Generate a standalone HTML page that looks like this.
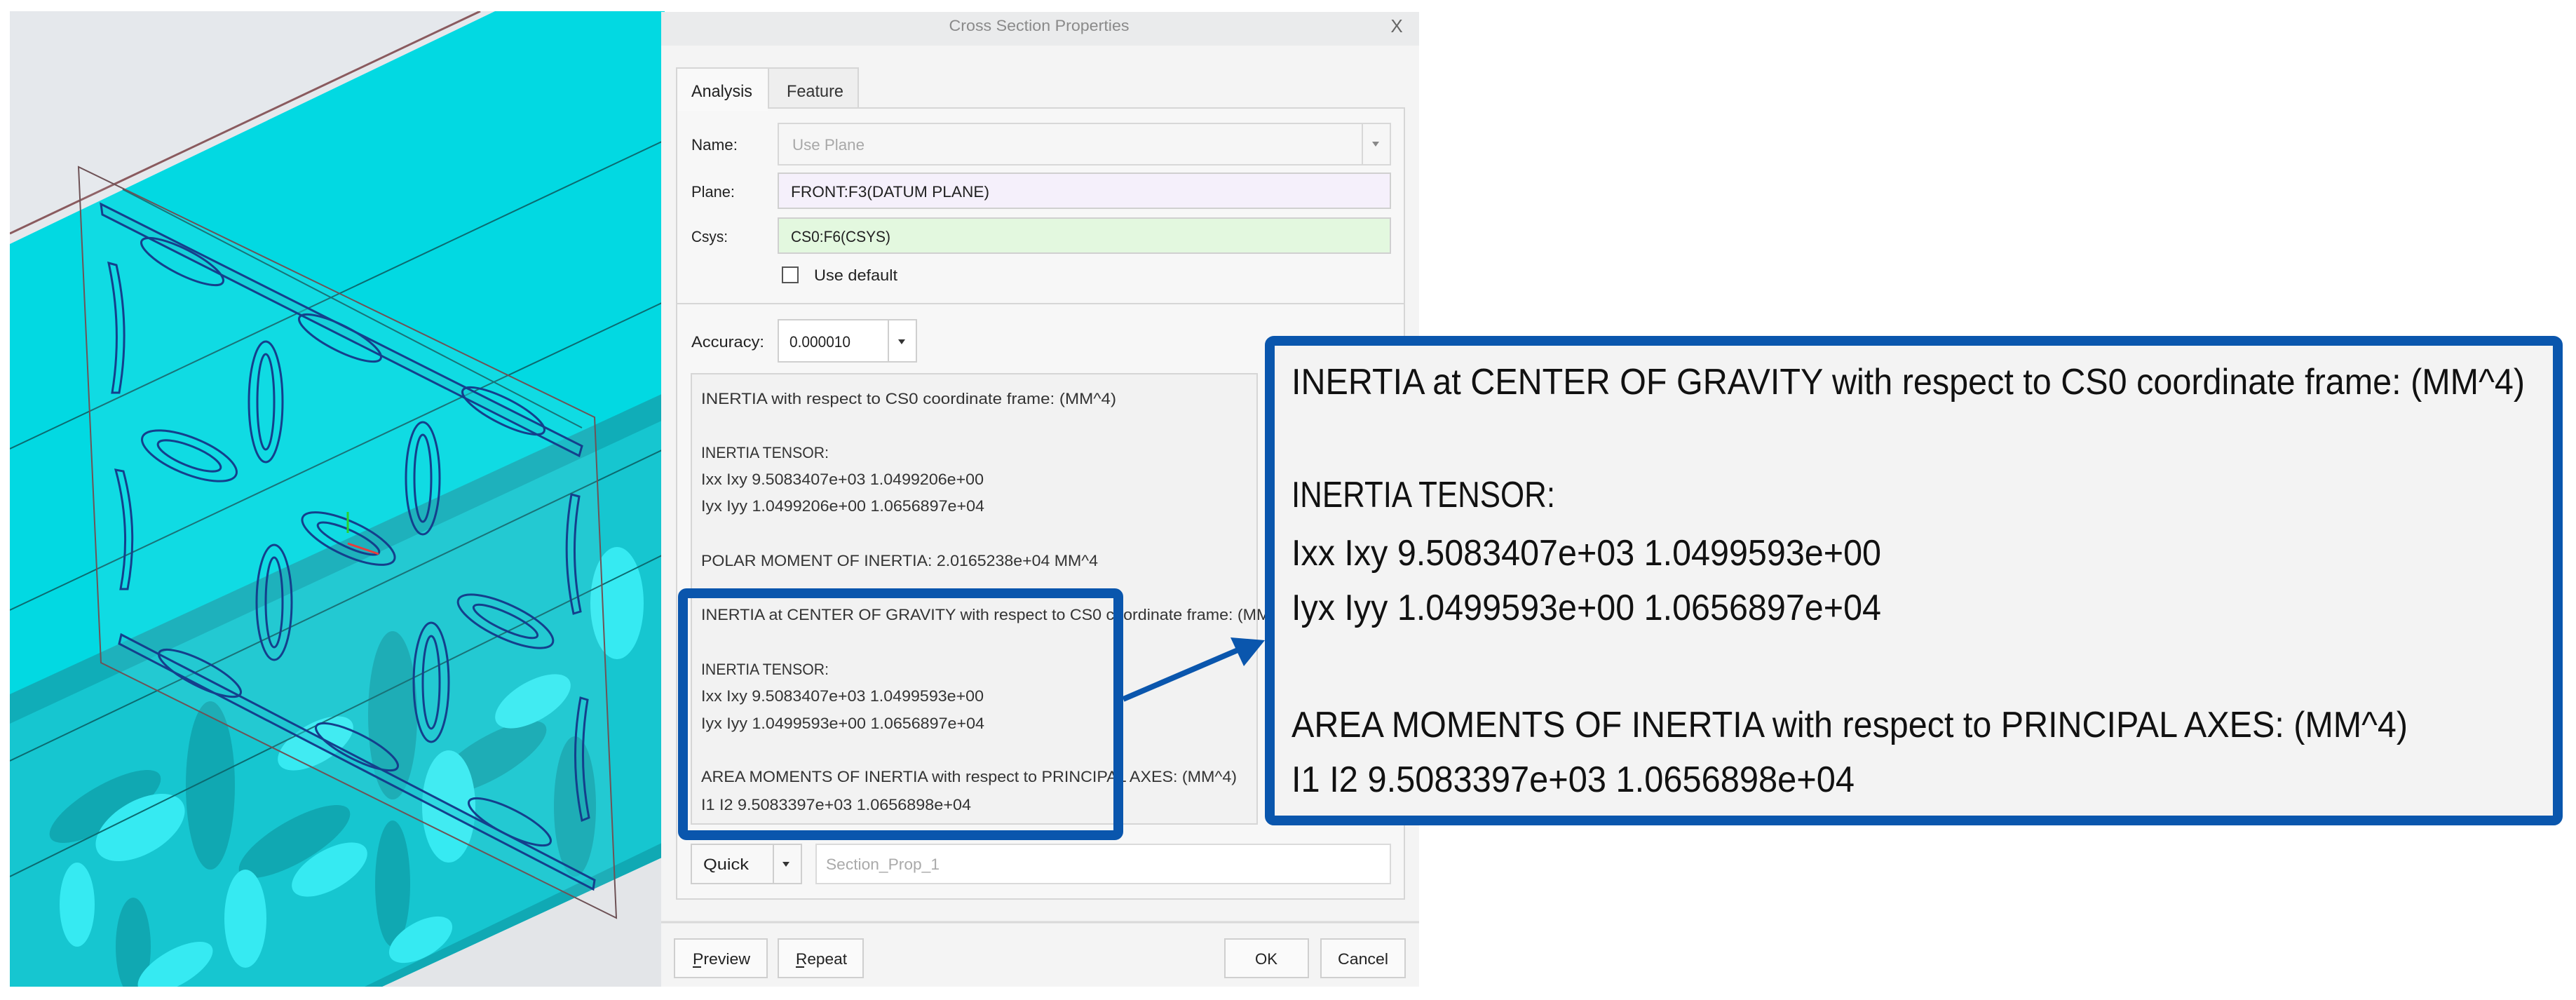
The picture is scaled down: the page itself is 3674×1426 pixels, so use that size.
<!DOCTYPE html>
<html><head><meta charset="utf-8"><style>html,body{margin:0;padding:0;background:#fff}svg{display:block}text{font-family:"Liberation Sans",sans-serif}</style></head>
<body>
<svg width="3674" height="1426" viewBox="0 0 3674 1426" xmlns="http://www.w3.org/2000/svg" xml:space="preserve">
<rect width="3674" height="1426" fill="#fff"/>
<defs><clipPath id="v"><rect x="14" y="16" width="934" height="1391"/></clipPath></defs>
<g clip-path="url(#v)">
<rect x="14" y="16" width="934" height="1391" fill="#02d9e2"/>
<polygon points="14,16 706,16 14,348" fill="#e5e8ec"/>
<line x1="14" y1="333" x2="685" y2="16" stroke="#8a5a5e" stroke-width="3"/>
<polygon points="14,1030 948,595 948,1407 14,1407" fill="#16c6d0"/>
<g fill="#0f9ea8" opacity="0.75">
<ellipse cx="300" cy="1120" rx="35" ry="120"/>
<ellipse cx="560" cy="1020" rx="35" ry="120"/>
<ellipse cx="190" cy="1350" rx="25" ry="70"/>
<ellipse cx="560" cy="1260" rx="25" ry="90"/>
<ellipse cx="820" cy="1150" rx="30" ry="100"/>
<ellipse cx="420" cy="1200" rx="90" ry="30" transform="rotate(-30 420 1200)"/>
<ellipse cx="700" cy="1080" rx="90" ry="30" transform="rotate(-30 700 1080)"/>
<ellipse cx="150" cy="1150" rx="90" ry="30" transform="rotate(-30 150 1150)"/>
<ellipse cx="760" cy="1330" rx="70" ry="25" transform="rotate(-30 760 1330)"/>
</g>
<g fill="#36eaf2">
<ellipse cx="200" cy="1180" rx="70" ry="38" transform="rotate(-30 200 1180)"/>
<ellipse cx="450" cy="1060" rx="60" ry="28" transform="rotate(-30 450 1060)"/>
<ellipse cx="110" cy="1290" rx="25" ry="60"/>
<ellipse cx="350" cy="1310" rx="30" ry="70"/>
<ellipse cx="470" cy="1240" rx="60" ry="28" transform="rotate(-30 470 1240)"/>
<ellipse cx="640" cy="1150" rx="38" ry="80"/>
<ellipse cx="760" cy="1000" rx="60" ry="28" transform="rotate(-30 760 1000)"/>
<ellipse cx="250" cy="1380" rx="60" ry="25" transform="rotate(-30 250 1380)"/>
<ellipse cx="880" cy="860" rx="38" ry="80"/>
<ellipse cx="600" cy="1340" rx="50" ry="25" transform="rotate(-30 600 1340)"/>
</g>
<polygon points="14,990 948,560 948,598 14,1032" fill="#10adb8"/>
<polygon points="545,1407 948,1221 948,1407" fill="#e3e5e8"/>
<polygon points="520,1407 948,1200 948,1221 545,1407" fill="#10a9b4"/>
<g stroke="#0b6a70" stroke-width="2" fill="none">
<line x1="14" y1="640" x2="948" y2="200"/>
<line x1="14" y1="870" x2="948" y2="430"/>
<line x1="14" y1="1250" x2="948" y2="790"/>
<line x1="14" y1="1085" x2="948" y2="640"/>
<line x1="175" y1="270" x2="830" y2="610"/>
</g>
<polygon points="112,238 848,595 879,1309 144,945" fill="#ffffff" fill-opacity="0.06" stroke="#6e5256" stroke-width="2"/>
<g stroke="#143f8c" stroke-width="3" fill="#1bc6d0" fill-opacity="0.5">
<polygon points="144,291 830,636 826,650 146,306"/>
<polygon points="173,905 848,1255 846,1268 170,918"/>
</g>
<g stroke="#143f8c" stroke-width="3" fill="none">
<ellipse cx="260" cy="373" rx="65" ry="18" transform="rotate(27 260 373)"/>
<ellipse cx="485" cy="482" rx="65" ry="18" transform="rotate(27 485 482)"/>
<ellipse cx="718" cy="586" rx="65" ry="18" transform="rotate(27 718 586)"/>
<ellipse cx="285" cy="960" rx="65" ry="18" transform="rotate(27 285 960)"/>
<ellipse cx="509" cy="1065" rx="65" ry="18" transform="rotate(27 509 1065)"/>
<ellipse cx="727" cy="1172" rx="65" ry="18" transform="rotate(27 727 1172)"/>
<ellipse cx="379" cy="573" rx="24" ry="86"/><ellipse cx="379" cy="573" rx="12" ry="68"/>
<ellipse cx="603" cy="682" rx="24" ry="80"/><ellipse cx="603" cy="682" rx="12" ry="62"/>
<ellipse cx="391" cy="859" rx="25" ry="82"/><ellipse cx="391" cy="859" rx="12" ry="64"/>
<ellipse cx="615" cy="973" rx="25" ry="85"/><ellipse cx="615" cy="973" rx="12" ry="66"/>
<ellipse cx="270" cy="650" rx="72" ry="26" transform="rotate(22 270 650)"/><ellipse cx="270" cy="650" rx="48" ry="14" transform="rotate(22 270 650)"/>
<ellipse cx="497" cy="768" rx="72" ry="24" transform="rotate(25 497 768)"/><ellipse cx="497" cy="768" rx="48" ry="12" transform="rotate(25 497 768)"/>
<ellipse cx="721" cy="886" rx="74" ry="24" transform="rotate(25 721 886)"/><ellipse cx="721" cy="886" rx="50" ry="12" transform="rotate(25 721 886)"/>
<path d="M155,375 Q175,468 160,560 L170,560 Q186,468 166,378 Z"/>
<path d="M165,670 Q188,755 172,840 L182,840 Q198,755 176,672 Z"/>
<path d="M815,705 Q800,791 818,875 L828,872 Q812,791 826,708 Z"/>
<path d="M828,995 Q812,1082 830,1170 L840,1166 Q824,1082 838,998 Z"/>
</g>
<line x1="496" y1="760" x2="496" y2="730" stroke="#2bd12b" stroke-width="3"/>
<line x1="496" y1="775" x2="540" y2="790" stroke="#e83c3c" stroke-width="3"/>
</g>

<rect x="943" y="17" width="1081" height="1390" fill="#f4f4f4"/>
<rect x="943" y="17" width="1081" height="48" fill="#eaebec"/>
<text x="1482" y="44" font-size="22" fill="#8a8a8a" text-anchor="middle" textLength="257" lengthAdjust="spacingAndGlyphs">Cross Section Properties</text>
<text x="1992" y="46" font-size="26" fill="#666" text-anchor="middle">X</text>
<rect x="965" y="97" width="131" height="58" fill="#f9f9f9" stroke="#d6d6d6" stroke-width="2"/>
<rect x="1096" y="97" width="128" height="57" fill="#eeeeee" stroke="#d6d6d6" stroke-width="2"/>
<rect x="965" y="154" width="1038" height="1128" fill="#f7f7f7" stroke="#d6d6d6" stroke-width="2"/>
<rect x="966" y="150" width="129" height="8" fill="#f9f9f9"/>
<text x="986" y="138" font-size="24" fill="#222" textLength="87" lengthAdjust="spacingAndGlyphs">Analysis</text>
<text x="1122" y="138" font-size="24" fill="#333" textLength="81" lengthAdjust="spacingAndGlyphs">Feature</text>
<g font-size="22">
<text x="986" y="214" fill="#222" textLength="66" lengthAdjust="spacingAndGlyphs">Name:</text>
<rect x="1110" y="176" width="873" height="59" fill="#f6f6f6" stroke="#d8d8d8" stroke-width="2"/>
<line x1="1943" y1="177" x2="1943" y2="234" stroke="#d8d8d8" stroke-width="2"/>
<polygon points="1957,202 1967,202 1962,209" fill="#888"/>
<text x="1130" y="214" fill="#a8a8a8" textLength="103" lengthAdjust="spacingAndGlyphs">Use Plane</text>
<text x="986" y="281" fill="#222" textLength="62" lengthAdjust="spacingAndGlyphs">Plane:</text>
<rect x="1110" y="247" width="873" height="50" fill="#f5f0fb" stroke="#d0d0d0" stroke-width="2"/>
<text x="1128" y="281" fill="#222" textLength="283" lengthAdjust="spacingAndGlyphs">FRONT:F3(DATUM PLANE)</text>
<text x="986" y="345" fill="#222" textLength="52" lengthAdjust="spacingAndGlyphs">Csys:</text>
<rect x="1110" y="311" width="873" height="50" fill="#e3f8df" stroke="#d0d0d0" stroke-width="2"/>
<text x="1128" y="345" fill="#222" textLength="142" lengthAdjust="spacingAndGlyphs">CS0:F6(CSYS)</text>
<rect x="1116" y="381" width="22" height="22" fill="#fff" stroke="#555" stroke-width="2"/>
<text x="1161" y="400" fill="#222" textLength="119" lengthAdjust="spacingAndGlyphs">Use default</text>
</g>
<line x1="966" y1="433" x2="2003" y2="433" stroke="#d6d6d6" stroke-width="2"/>
<text x="986" y="495" font-size="22" fill="#222" textLength="104" lengthAdjust="spacingAndGlyphs">Accuracy:</text>
<rect x="1110" y="456" width="197" height="60" fill="#fff" stroke="#cfcfcf" stroke-width="2"/>
<line x1="1267" y1="457" x2="1267" y2="515" stroke="#cfcfcf" stroke-width="2"/>
<polygon points="1281,484 1291,484 1286,491" fill="#333"/>
<text x="1126" y="495" font-size="22" fill="#222" textLength="87" lengthAdjust="spacingAndGlyphs">0.000010</text>
<rect x="986" y="533" width="807" height="642" fill="#f2f2f2" stroke="#d6d6d6" stroke-width="2"/>
<g font-size="22" fill="#333">
<text x="1000" y="576" textLength="592" lengthAdjust="spacingAndGlyphs">INERTIA with respect to CS0 coordinate frame:  (MM^4)</text>
<text x="1000" y="653" textLength="182" lengthAdjust="spacingAndGlyphs">INERTIA TENSOR:</text>
<text x="1000" y="691" textLength="403" lengthAdjust="spacingAndGlyphs">Ixx Ixy  9.5083407e+03  1.0499206e+00</text>
<text x="1000" y="729" textLength="404" lengthAdjust="spacingAndGlyphs">Iyx Iyy  1.0499206e+00  1.0656897e+04</text>
<text x="1000" y="807" textLength="566" lengthAdjust="spacingAndGlyphs">POLAR MOMENT OF INERTIA:  2.0165238e+04 MM^4</text>
<text x="1000" y="884" textLength="843" lengthAdjust="spacingAndGlyphs">INERTIA at CENTER OF GRAVITY with respect to CS0 coordinate frame:  (MM^4)</text>
<text x="1000" y="962" textLength="182" lengthAdjust="spacingAndGlyphs">INERTIA TENSOR:</text>
<text x="1000" y="1000" textLength="403" lengthAdjust="spacingAndGlyphs">Ixx Ixy  9.5083407e+03  1.0499593e+00</text>
<text x="1000" y="1039" textLength="404" lengthAdjust="spacingAndGlyphs">Iyx Iyy  1.0499593e+00  1.0656897e+04</text>
<text x="1000" y="1115" textLength="764" lengthAdjust="spacingAndGlyphs">AREA MOMENTS OF INERTIA with respect to PRINCIPAL AXES:  (MM^4)</text>
<text x="1000" y="1155" textLength="385" lengthAdjust="spacingAndGlyphs">I1  I2  9.5083397e+03  1.0656898e+04</text>
</g>
<rect x="986" y="1204" width="157" height="56" fill="#f8f8f8" stroke="#cfcfcf" stroke-width="2"/>
<line x1="1103" y1="1205" x2="1103" y2="1259" stroke="#cfcfcf" stroke-width="2"/>
<polygon points="1116,1229 1126,1229 1121,1236" fill="#333"/>
<text x="1003" y="1240" font-size="22" fill="#222" textLength="65" lengthAdjust="spacingAndGlyphs">Quick</text>
<rect x="1164" y="1204" width="819" height="56" fill="#fff" stroke="#dadada" stroke-width="2"/>
<text x="1178" y="1240" font-size="22" fill="#aaa" textLength="162" lengthAdjust="spacingAndGlyphs">Section_Prop_1</text>
<line x1="943" y1="1315" x2="2024" y2="1315" stroke="#d8d8d8" stroke-width="3"/>
<g font-size="22" fill="#222">
<rect x="962" y="1339" width="132" height="55" fill="#fafafa" stroke="#cfcfcf" stroke-width="2"/>
<text x="988" y="1375" textLength="82" lengthAdjust="spacingAndGlyphs">Preview</text>
<line x1="988" y1="1379" x2="1000" y2="1379" stroke="#222" stroke-width="2"/>
<rect x="1110" y="1339" width="121" height="55" fill="#fafafa" stroke="#cfcfcf" stroke-width="2"/>
<text x="1135" y="1375" textLength="73" lengthAdjust="spacingAndGlyphs">Repeat</text>
<line x1="1135" y1="1379" x2="1147" y2="1379" stroke="#222" stroke-width="2"/>
<rect x="1747" y="1339" width="119" height="55" fill="#fafafa" stroke="#cfcfcf" stroke-width="2"/>
<text x="1790" y="1375" textLength="32" lengthAdjust="spacingAndGlyphs">OK</text>
<rect x="1884" y="1339" width="120" height="55" fill="#fafafa" stroke="#cfcfcf" stroke-width="2"/>
<text x="1908" y="1375" textLength="72" lengthAdjust="spacingAndGlyphs">Cancel</text>
</g>
<rect x="974" y="846" width="621" height="345" rx="5" fill="none" stroke="#0a56ad" stroke-width="14"/>
<line x1="1602" y1="997" x2="1770" y2="925" stroke="#0a56ad" stroke-width="8"/>
<polygon points="1804,913 1755,909 1774,950" fill="#0a56ad"/>
<rect x="1811" y="486" width="1837" height="684" rx="6" fill="#f3f3f3" stroke="#0a56ad" stroke-width="14"/>
<g font-size="52" fill="#111">
<text x="1842" y="562" textLength="1759" lengthAdjust="spacingAndGlyphs">INERTIA at CENTER OF GRAVITY with respect to CS0 coordinate frame:  (MM^4)</text>
<text x="1842" y="723" textLength="376" lengthAdjust="spacingAndGlyphs">INERTIA TENSOR:</text>
<text x="1842" y="806" textLength="841" lengthAdjust="spacingAndGlyphs">Ixx Ixy  9.5083407e+03  1.0499593e+00</text>
<text x="1842" y="884" textLength="841" lengthAdjust="spacingAndGlyphs">Iyx Iyy  1.0499593e+00  1.0656897e+04</text>
<text x="1842" y="1051" textLength="1592" lengthAdjust="spacingAndGlyphs">AREA MOMENTS OF INERTIA with respect to PRINCIPAL AXES:  (MM^4)</text>
<text x="1842" y="1129" textLength="803" lengthAdjust="spacingAndGlyphs">I1  I2  9.5083397e+03  1.0656898e+04</text>
</g>
</svg>
</body></html>
